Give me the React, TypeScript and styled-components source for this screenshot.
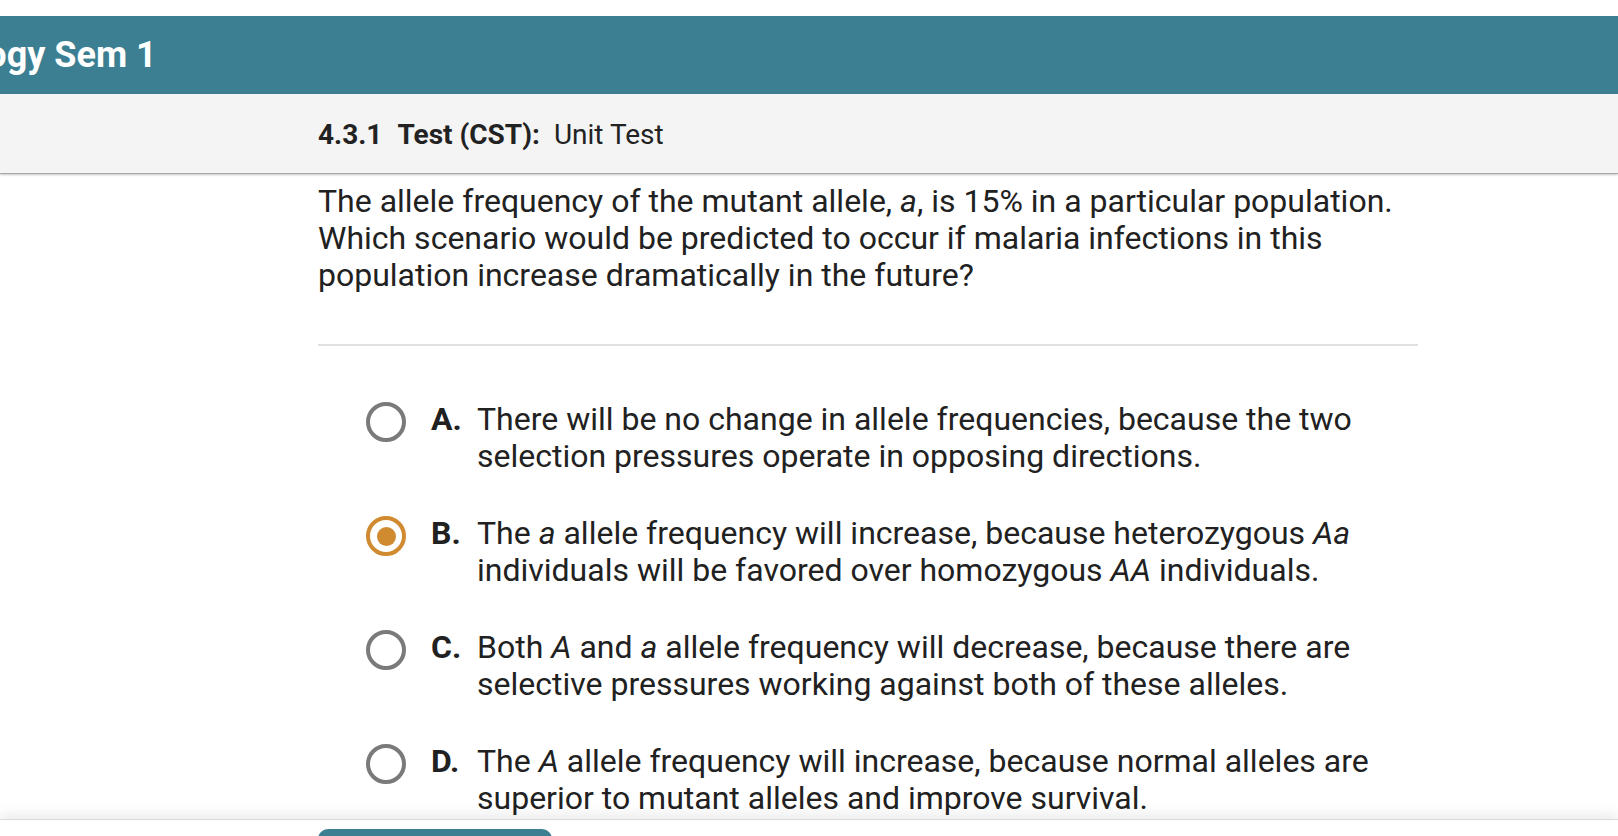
import React from "react";
import styled, { createGlobalStyle } from "styled-components";

const Global = createGlobalStyle`
  html, body { margin: 0; padding: 0; background: #ffffff; overflow: hidden; }
  body { font-family: Roboto, "Noto Sans", "Liberation Sans", sans-serif; color: #212121; }
  * { box-sizing: border-box; }
`;

const Page = styled.div`
  width: 1618px;
  height: 836px;
  display: flex;
  flex-direction: column;
  overflow: hidden;
  background: #ffffff;
`;

const TopGap = styled.div`
  height: 16px;
  flex: none;
  background: #ffffff;
`;

const CourseBar = styled.header`
  height: 78px;
  flex: none;
  background: #3c7f92;
  display: flex;
  align-items: center;
  overflow: hidden;
`;

const CourseTitle = styled.h1`
  margin: 0 0 0 -76px;
  font-size: 36px;
  font-weight: 700;
  color: #ffffff;
  white-space: nowrap;
  line-height: 1;
`;

const ActivityBar = styled.div`
  height: 80px;
  flex: none;
  background: #f4f4f4;
  border-bottom: 1px solid #a8a8a8;
  box-shadow: 0 1px 2px rgba(0, 0, 0, 0.22);
  display: flex;
  align-items: center;
  padding-left: 318px;
  position: relative;
  z-index: 1;
`;

const ActivityText = styled.div`
  font-size: 28px;
  color: #222222;
  display: flex;
  align-items: baseline;
  margin-top: 2px;
`;

const Bold = styled.span<{ $gap: number }>`
  font-weight: 700;
  margin-right: ${(p) => p.$gap}px;
`;

const Main = styled.main`
  flex: 1;
  min-height: 0;
  overflow: hidden;
  padding-top: 9px;
`;

const Column = styled.div`
  margin-left: 318px;
  width: 1100px;
`;

const Question = styled.p`
  margin: 0;
  font-size: 32px;
  line-height: 37px;
  color: #212121;
`;

const Divider = styled.hr`
  margin: 50px 0 0 0;
  border: none;
  height: 2px;
  background: #e1e1e1;
`;

const OptionList = styled.div`
  margin-top: 55px;
  padding-left: 48px;
  display: flex;
  flex-direction: column;
  gap: 40px;
`;

const OptionRow = styled.label`
  display: grid;
  grid-template-columns: 40px 46px 1fr;
  align-items: start;
  font-size: 32px;
  line-height: 37px;
  color: #212121;
  cursor: pointer;
`;

const Radio = styled.span<{ $checked: boolean }>`
  width: 40px;
  height: 40px;
  margin-top: 1px;
  border-radius: 50%;
  border: 4px solid ${(p) => (p.$checked ? "#d08a30" : "#7a7a7a")};
  display: flex;
  align-items: center;
  justify-content: center;
  &::after {
    content: "";
    width: 19px;
    height: 19px;
    border-radius: 50%;
    background: ${(p) => (p.$checked ? "#d08a30" : "transparent")};
  }
`;

const Letter = styled.span`
  font-weight: 700;
  margin-left: 25px;
  white-space: nowrap;
`;

const OptionText = styled.span`
  padding-left: 25px;
`;

const Footer = styled.footer`
  height: 17px;
  flex: none;
  position: relative;
  background: #ffffff;
  border-top: 1px solid #dadada;
  box-shadow: 0 -6px 12px rgba(0, 0, 0, 0.07);
  padding: 9px 0 0 318px;
  overflow: hidden;
`;

const SubmitButton = styled.button`
  width: 234px;
  height: 48px;
  border: none;
  border-radius: 10px 10px 0 0;
  background: #3c7f92;
  color: #ffffff;
  font-family: inherit;
  font-size: 22px;
`;

const options: { letter: string; content: React.ReactNode; checked: boolean }[] = [
  {
    letter: "A.",
    content: (
      <>
        There will be no change in allele frequencies, because the two selection pressures operate in opposing
        directions.
      </>
    ),
    checked: false,
  },
  {
    letter: "B.",
    content: (
      <>
        The <i>a</i> allele frequency will increase, because heterozygous <i>Aa</i> individuals will be favored over
        homozygous <i>AA</i> individuals.
      </>
    ),
    checked: true,
  },
  {
    letter: "C.",
    content: (
      <>
        Both <i>A</i> and <i>a</i> allele frequency will decrease, because there are selective pressures working
        against both of these alleles.
      </>
    ),
    checked: false,
  },
  {
    letter: "D.",
    content: (
      <>
        The <i>A</i> allele frequency will increase, because normal alleles are superior to mutant alleles and improve
        survival.
      </>
    ),
    checked: false,
  },
];

export default function App() {
  return (
    <Page>
      <Global />
      <TopGap />
      <CourseBar>
        <CourseTitle>Biology Sem 1</CourseTitle>
      </CourseBar>
      <ActivityBar>
        <ActivityText>
          <Bold $gap={15}>4.3.1</Bold>
          <Bold $gap={14}>Test (CST):</Bold>
          <span>Unit Test</span>
        </ActivityText>
      </ActivityBar>
      <Main>
        <Column>
          <Question>
            The allele frequency of the mutant allele, <i>a</i>, is 15% in a particular population. Which scenario would
            be predicted to occur if malaria infections in this population increase dramatically in the future?
          </Question>
          <Divider />
          <OptionList>
            {options.map((o) => (
              <OptionRow key={o.letter}>
                <Radio $checked={o.checked} />
                <Letter>{o.letter}</Letter>
                <OptionText>{o.content}</OptionText>
              </OptionRow>
            ))}
          </OptionList>
        </Column>
      </Main>
      <Footer>
        <SubmitButton />
      </Footer>
    </Page>
  );
}
